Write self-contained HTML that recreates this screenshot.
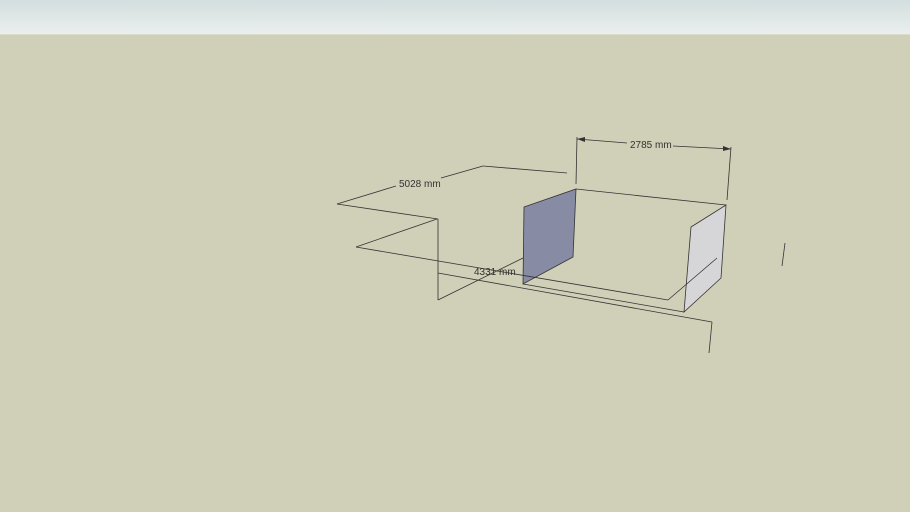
<!DOCTYPE html>
<html><head><meta charset="utf-8"><style>
html,body{margin:0;padding:0;width:910px;height:512px;overflow:hidden;background:#d0cfb8}
svg{position:absolute;left:0;top:0}
.sky{position:absolute;left:0;top:0;width:910px;height:34px;background:linear-gradient(#d3dede,#eaefee)}
.hz{position:absolute;left:0;top:34px;width:910px;height:1px;background:#dcdccb}
text{font-family:"Liberation Sans",sans-serif;font-size:10px;fill:#333}
</style></head><body>
<div class="sky"></div><div class="hz"></div>
<svg width="910" height="512" viewBox="0 0 910 512">
<g stroke="#333" stroke-width="0.8" fill="none">
<polygon points="524,207 576,189 573,257 523,284" fill="#878ba3" stroke="#333"/>
<polygon points="691,227 726,205 721,278 684,312" fill="#d6d6d8" stroke="#333"/>
<line x1="576" y1="189" x2="726" y2="205"/>
<line x1="523" y1="284" x2="684" y2="312"/>
<line x1="577" y1="137" x2="576" y2="184"/>
<line x1="731" y1="147" x2="727" y2="200"/>
<line x1="577" y1="139" x2="627" y2="143"/>
<line x1="673" y1="146" x2="731" y2="149"/>
<line x1="337" y1="204" x2="396" y2="186"/>
<line x1="441" y1="178" x2="483" y2="166"/>
<line x1="483" y1="166" x2="567" y2="173"/>
<line x1="337" y1="204" x2="438" y2="219"/>
<line x1="438" y1="219" x2="438" y2="300"/>
<line x1="438" y1="300" x2="523" y2="258"/>
<line x1="356" y1="247" x2="437" y2="219"/>
<line x1="356" y1="247" x2="668" y2="300"/>
<line x1="668" y1="300" x2="717" y2="258"/>
<line x1="438" y1="273" x2="712" y2="322"/>
<line x1="712" y1="322" x2="709" y2="353"/>
<line x1="785" y1="243" x2="782" y2="266"/>
</g>
<polygon points="577,139 585,137 585,142" fill="#333"/>
<polygon points="731,149 723,146 723,151" fill="#333"/>
<rect x="629" y="138" width="43" height="12" fill="#d0cfb8"/>
<text x="630" y="148">2785 mm</text>
<text x="399" y="187">5028 mm</text>
<text x="474" y="275">4331 mm</text>
</svg>
</body></html>
